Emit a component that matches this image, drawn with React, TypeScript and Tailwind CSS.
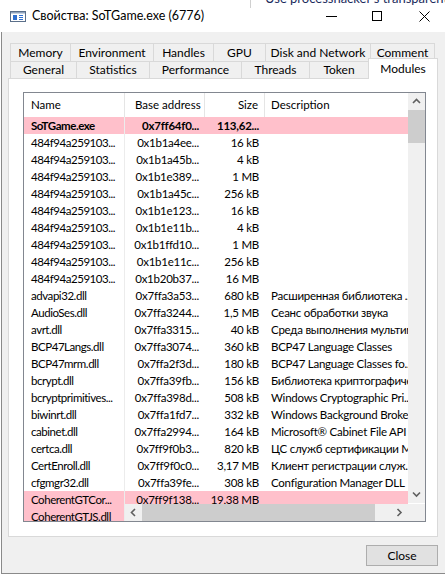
import React from "react";

type Row = { name: string; base: string; size: string; desc: string; hl?: boolean; bold?: boolean };

const rows: Row[] = [
  { name: "SoTGame.exe", base: "0x7ff64f0...", size: "113,62...", desc: "", hl: true, bold: true },
  { name: "484f94a259103...", base: "0x1b1a4ee...", size: "16 kB", desc: "" },
  { name: "484f94a259103...", base: "0x1b1a45b...", size: "4 kB", desc: "" },
  { name: "484f94a259103...", base: "0x1b1e389...", size: "1 MB", desc: "" },
  { name: "484f94a259103...", base: "0x1b1a45c...", size: "256 kB", desc: "" },
  { name: "484f94a259103...", base: "0x1b1e123...", size: "16 kB", desc: "" },
  { name: "484f94a259103...", base: "0x1b1e11b...", size: "4 kB", desc: "" },
  { name: "484f94a259103...", base: "0x1b1ffd10...", size: "1 MB", desc: "" },
  { name: "484f94a259103...", base: "0x1b1e11c...", size: "256 kB", desc: "" },
  { name: "484f94a259103...", base: "0x1b20b37...", size: "16 MB", desc: "" },
  { name: "advapi32.dll", base: "0x7ffa3a53...", size: "680 kB", desc: "Расширенная библиотека ..." },
  { name: "AudioSes.dll", base: "0x7ffa3244...", size: "1,5 MB", desc: "Сеанс обработки звука" },
  { name: "avrt.dll", base: "0x7ffa3315...", size: "40 kB", desc: "Среда выполнения мультимедиа" },
  { name: "BCP47Langs.dll", base: "0x7ffa3074...", size: "360 kB", desc: "BCP47 Language Classes" },
  { name: "BCP47mrm.dll", base: "0x7ffa2f3d...", size: "180 kB", desc: "BCP47 Language Classes fo..." },
  { name: "bcrypt.dll", base: "0x7ffa39fb...", size: "156 kB", desc: "Библиотека криптографических" },
  { name: "bcryptprimitives...", base: "0x7ffa398d...", size: "508 kB", desc: "Windows Cryptographic Pri..." },
  { name: "biwinrt.dll", base: "0x7ffa1fd7...", size: "332 kB", desc: "Windows Background Broker" },
  { name: "cabinet.dll", base: "0x7ffa2994...", size: "164 kB", desc: "Microsoft® Cabinet File API" },
  { name: "certca.dll", base: "0x7ff9f0b3...", size: "820 kB", desc: "ЦС служб сертификации Майкрософт" },
  { name: "CertEnroll.dll", base: "0x7ff9f0c0...", size: "3,17 MB", desc: "Клиент регистрации служ..." },
  { name: "cfgmgr32.dll", base: "0x7ffa39fe...", size: "308 kB", desc: "Configuration Manager DLL" },
  { name: "CoherentGTCor...", base: "0x7ff9f138...", size: "19,38 MB", desc: "", hl: true },
  { name: "CoherentGTJS.dll", base: "0x7ff9f1a2...", size: "2,41 MB", desc: "", hl: true },
];

const backTabs: [string, number][] = [
  ["Memory", 60],
  ["Environment", 83],
  ["Handles", 60],
  ["GPU", 52],
  ["Disk and Network", 105],
  ["Comment", 65],
];

const frontTabs: [string, number][] = [
  ["General", 66],
  ["Statistics", 73],
  ["Performance", 92],
  ["Threads", 68],
  ["Token", 59],
];

function Chevron({ dir }: { dir: "up" | "down" | "left" | "right" }) {
  const pts = {
    up: "1,5 4.5,1.5 8,5",
    down: "1,1.5 4.5,5 8,1.5",
    left: "5,1 1.5,4.5 5,8",
    right: "1.5,1 5,4.5 1.5,8",
  }[dir];
  const horiz = dir === "up" || dir === "down";
  return (
    <svg width={horiz ? 9 : 7} height={horiz ? 7 : 9} viewBox={horiz ? "0 0 9 7" : "0 0 7 9"}>
      <polyline points={pts} fill="none" stroke="#606060" strokeWidth="1.6" />
    </svg>
  );
}

function TitleIcon() {
  return (
    <svg width="16" height="11" viewBox="0 0 16 11">
      <rect x="0.5" y="0.5" width="15" height="10" fill="#fff" stroke="#5b6f8a" />
      <rect x="1" y="1" width="14" height="1.5" fill="#8fa3bd" />
      <rect x="3" y="4" width="4" height="5" fill="#2f6fce" />
      <rect x="9" y="4" width="4" height="1" fill="#2f6fce" />
      <rect x="9" y="6" width="4" height="1" fill="#2f6fce" />
      <rect x="9" y="8" width="4" height="1" fill="#2f6fce" />
    </svg>
  );
}

function ModuleList() {
  return (
    <div className="relative ml-[14px] mt-[13px] flex h-[430px] w-[403px] border border-[#828790] bg-white">
      <div className="w-[384px] overflow-hidden">
        <div className="flex h-[24px] items-center whitespace-nowrap text-black">
          <div className="h-full w-[101px] border-r border-[#e5e5e5] pl-[7px] leading-[24px]">Name</div>
          <div className="h-full w-[80px] border-r border-[#e5e5e5] pl-[10px] leading-[24px]">Base address</div>
          <div className="h-full w-[60px] border-r border-[#e5e5e5] pr-[6px] text-right leading-[24px]">Size</div>
          <div className="h-full flex-1 pl-[6px] leading-[24px]">Description</div>
        </div>
        {rows.map((r, i) => (
          <div
            key={i}
            className={`flex h-[17px] leading-[17px] tracking-[-0.25px] whitespace-nowrap ${r.hl ? "bg-[#ffc0cb]" : ""} ${r.bold ? "font-bold" : ""}`}
          >
            <div className="w-[101px] shrink-0 overflow-hidden border-r border-[#ececec] pl-[7px] tracking-[-0.45px]">
              {r.name}
            </div>
            <div className="w-[80px] shrink-0 overflow-hidden pr-[6px] text-right">{r.base}</div>
            <div className="w-[60px] shrink-0 overflow-hidden pr-[6px] text-right">{r.size}</div>
            <div className="min-w-0 flex-1 overflow-hidden pl-[6px]">{r.desc}</div>
          </div>
        ))}
      </div>
      <div className="flex h-[410px] w-[17px] flex-col bg-[#f0f0f0]">
        <div className="flex h-[17px] items-center justify-center">
          <Chevron dir="up" />
        </div>
        <div className="h-[33px] bg-[#cdcdcd]" />
        <div className="flex-1" />
        <div className="flex h-[17px] items-center justify-center">
          <Chevron dir="down" />
        </div>
      </div>
      <div className="absolute bottom-0 left-[101px] right-0 flex h-[17px] bg-[#f0f0f0]">
        <div className="flex w-[17px] items-center justify-center">
          <Chevron dir="left" />
        </div>
        <div className="w-[233px] bg-[#cdcdcd]" />
        <div className="flex-1" />
        <div className="flex w-[17px] items-center justify-center">
          <Chevron dir="right" />
        </div>
        <div className="w-[17px]" />
      </div>
    </div>
  );
}

export default function App() {
  return (
    <div className="relative h-[576px] w-[445px] overflow-hidden bg-white font-['Lato','Noto_Sans',sans-serif] text-[11.5px] text-black">
      <div className="absolute left-[250px] top-0 h-[8px] w-px bg-[#d0d0d0]" />
      <div className="absolute left-[265px] top-[-11px] whitespace-nowrap text-[13px] text-[#1a2b5c]">
        Use processhacker's transparent frame
      </div>

      <div className="flex h-[574px] w-[470px] flex-col">
        <div className="flex h-[32px] items-center">
          <div className="ml-[10px] flex items-center">
            <TitleIcon />
          </div>
          <span className="ml-[6px] text-[12.5px]">Свойства: SoTGame.exe (6776)</span>
          <div className="ml-auto mr-[40px] flex items-center">
            <div className="h-px w-[11px] bg-black" />
            <div className="ml-[35px] h-[10px] w-[10px] border border-black" />
            <svg className="ml-[37px]" width="11" height="11" viewBox="0 0 11 11">
              <path d="M0.5 0.5 L10.5 10.5 M10.5 0.5 L0.5 10.5" stroke="#000" strokeWidth="1" />
            </svg>
          </div>
        </div>

        <div className="ml-[1px] flex flex-1 flex-col border-b border-l border-[#8a8a8a] bg-[#f0f0f0] pb-[7px]">
          <div className="ml-[8px] mt-[11px] flex h-[18px] text-[12px]">
            {backTabs.map(([t, w], i) => (
              <div
                key={t}
                style={{ width: w }}
                className={`flex items-center justify-center border-l border-t border-[#d9d9d9] ${i === backTabs.length - 1 ? "border-r" : ""}`}
              >
                {t}
              </div>
            ))}
          </div>
          <div className="ml-[8px] flex h-[17px] items-end text-[12px]">
            {frontTabs.map(([t, w]) => (
              <div
                key={t}
                style={{ width: w }}
                className="flex h-[17px] items-center justify-center border-l border-t border-[#d9d9d9] pb-[1px]"
              >
                {t}
              </div>
            ))}
            <div className="relative z-10 mb-[-1px] flex h-[21px] w-[70px] justify-center border-l border-r border-t border-[#d9d9d9] bg-white pt-[1px]">
              Modules
            </div>
          </div>
          <div className="ml-[6px] h-[459px] w-[430px] border border-[#d9d9d9] bg-white">
            <ModuleList />
          </div>
          <div className="ml-[364px] mt-[8px] flex h-[21px] w-[72px] items-center justify-center border border-[#adadad] bg-[#e1e1e1] text-[12px]">
            Close
          </div>
        </div>
      </div>
    </div>
  );
}
